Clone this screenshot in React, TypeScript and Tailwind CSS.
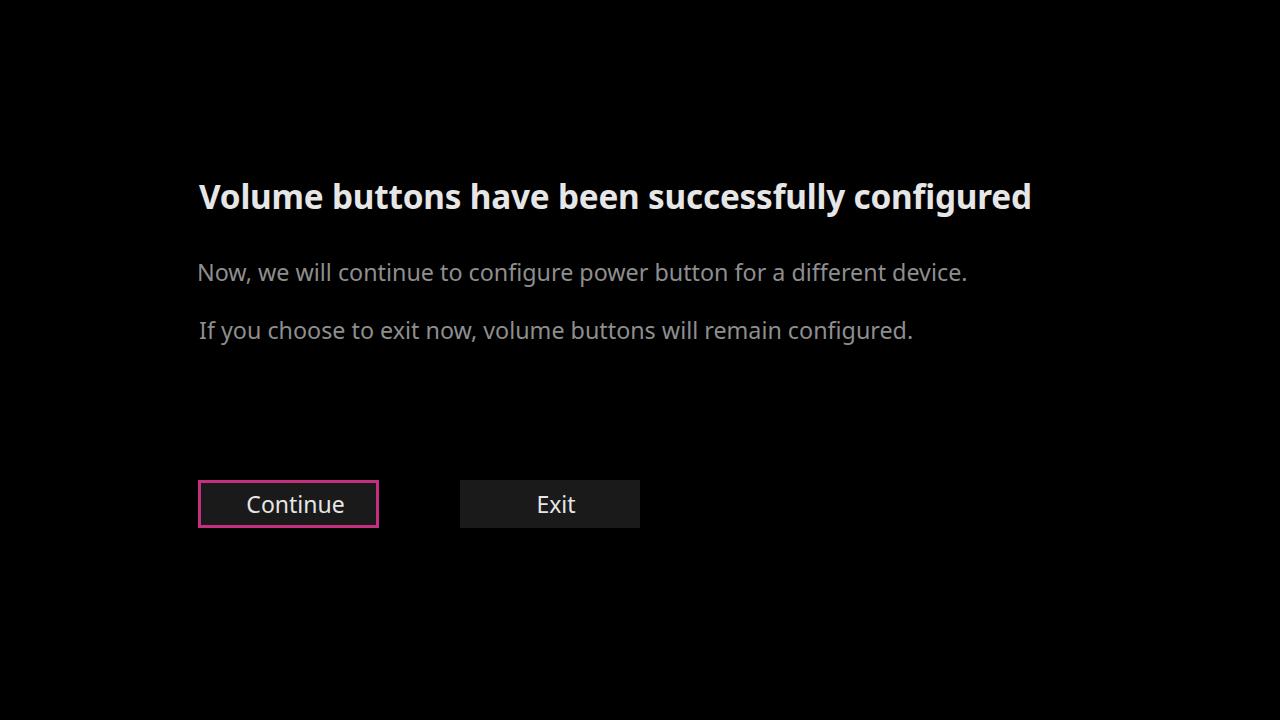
import React from "react";

export default function App() {
  return (
    <div
      className="w-[1280px] h-[720px] bg-black flex flex-col"
      style={{ fontFamily: '"Noto Sans", "Open Sans", sans-serif' }}
    >
      <div className="pl-[198px] pt-[172px] flex flex-col">
        <h1 className="text-[33.3px] font-bold text-[#e6e6e6] leading-[48px] tracking-[-0.2px] ml-[1px]">
          Volume buttons have been successfully configured
        </h1>
        <p className="mt-[36px] text-[23.3px] text-[#8e8e8e] leading-[32px] -ml-[1px]">
          Now, we will continue to configure power button for a different device.
        </p>
        <p className="mt-[26px] text-[23.3px] text-[#8e8e8e] leading-[32px] ml-[1px]">
          If you choose to exit now, volume buttons will remain configured.
        </p>
        <div className="mt-[134px] flex gap-[81px]">
          <button className="w-[181px] h-[48px] border-[3px] border-[#c4307f] bg-[#1a1a1a] text-[#e6e6e6] text-[23px] flex items-center justify-center pl-[14px]">
            Continue
          </button>
          <button className="w-[180px] h-[48px] bg-[#1a1a1a] text-[#e6e6e6] text-[23px] flex items-center justify-center pl-[12px]">
            Exit
          </button>
        </div>
      </div>
    </div>
  );
}
